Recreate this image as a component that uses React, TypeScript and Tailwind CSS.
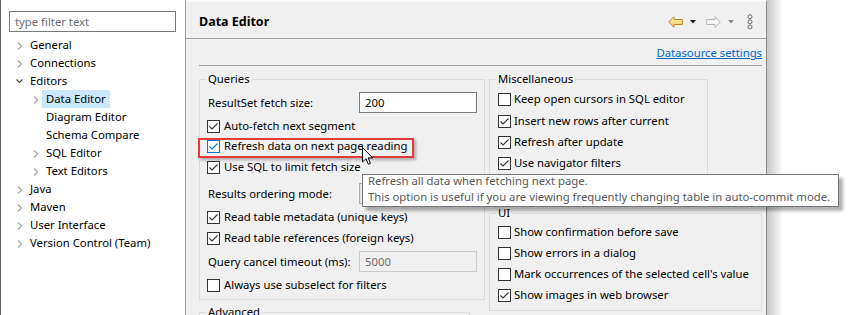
import React from "react";

function Chevron({ open, show = true }: { open?: boolean; show?: boolean }) {
  return (
    <svg width="13" height="18" viewBox="0 0 13 18" className="shrink-0">
      {show &&
        (open ? (
          <polyline points="3.5,7.5 6.5,10.5 9.5,7.5" fill="none" stroke="#4a4a4a" strokeWidth="1.2" />
        ) : (
          <polyline points="5,6.5 8.5,10 5,13.5" fill="none" stroke="#a6a6a6" strokeWidth="1.3" />
        ))}
    </svg>
  );
}

function Check({ checked, focus }: { checked?: boolean; focus?: boolean }) {
  const c = focus ? "#0078d7" : "#333333";
  return (
    <svg width="13" height="13" viewBox="0 0 13 13" className="shrink-0">
      <rect x="0.5" y="0.5" width="12" height="12" fill="#ffffff" stroke={c} />
      {checked && <polyline points="2.5,6.5 5,9 10.5,3.5" fill="none" stroke={c} strokeWidth="1.1" />}
    </svg>
  );
}

type Node = { label: string; level: number; chevron?: "open" | "closed" | "none"; selected?: boolean };

const tree: Node[] = [
  { label: "General", level: 0, chevron: "closed" },
  { label: "Connections", level: 0, chevron: "closed" },
  { label: "Editors", level: 0, chevron: "open" },
  { label: "Data Editor", level: 1, chevron: "closed", selected: true },
  { label: "Diagram Editor", level: 1, chevron: "none" },
  { label: "Schema Compare", level: 1, chevron: "none" },
  { label: "SQL Editor", level: 1, chevron: "closed" },
  { label: "Text Editors", level: 1, chevron: "closed" },
  { label: "Java", level: 0, chevron: "closed" },
  { label: "Maven", level: 0, chevron: "closed" },
  { label: "User Interface", level: 0, chevron: "closed" },
  { label: "Version Control (Team)", level: 0, chevron: "closed" },
];

function CheckRow({ label, checked, focus, mt, right }: { label: string; checked?: boolean; focus?: boolean; mt: string; right?: boolean }) {
  return (
    <div className={`${mt} h-[20px] flex items-center ${right ? "pl-[8px] gap-[3px]" : "pl-[7px] gap-[4px]"}`}>
      <Check checked={checked} focus={focus} />
      <span className="whitespace-nowrap">{label}</span>
    </div>
  );
}

export default function App() {
  return (
    <div className="relative flex w-[862px] h-[315px] overflow-hidden bg-white text-[11.3px] leading-[16px] text-black font-['Noto_Sans',sans-serif]">
      {/* Left tree panel */}
      <div className="w-[186px] h-full shrink-0 bg-white border-l border-l-[#5e5e5e] border-r border-r-[#a0a0a0]">
        <div className="ml-[8px] mt-[11px] w-[167px] h-[21px] border border-[#7a7a7a] flex items-center pl-[5px] text-[#6d6d6d]">
          type filter text
        </div>
        <div className="mt-[4px]">
          {tree.map((n) => (
            <div key={n.label} className={`h-[18px] flex items-center ${n.level === 0 ? "pl-[12px]" : "pl-[28px]"}`}>
              <Chevron open={n.chevron === "open"} show={n.chevron !== "none"} />
              <div className={`h-full flex items-center px-[4px] whitespace-nowrap ${n.selected ? "bg-[#cce8ff]" : ""}`}>{n.label}</div>
            </div>
          ))}
        </div>
      </div>

      {/* Right preference page */}
      <div className="w-[581px] h-full shrink-0 bg-[#f0f0f0] border-r border-r-[#8a8a8a] border-t-[2px] border-t-[#f9f9f9] flex flex-col">
        {/* Header */}
        <div className="h-[37px] shrink-0 border-b border-b-[#a0a0a0] flex items-center pt-[4px] pl-[13px] pr-[13px]">
          <span className="font-bold text-[12.5px]">Data Editor</span>
          <div className="ml-auto flex items-center">
            <svg width="15" height="12" viewBox="0 0 15 12">
              <defs>
                <linearGradient id="bk" x1="0" y1="0" x2="0" y2="1">
                  <stop offset="0" stopColor="#fff6cf" />
                  <stop offset="1" stopColor="#f3c24e" />
                </linearGradient>
              </defs>
              <polygon points="0.7,6 6,0.7 6,3.5 14.3,3.5 14.3,8.5 6,8.5 6,11.3" fill="url(#bk)" stroke="#c3861d" strokeWidth="1" strokeLinejoin="round" />
            </svg>
            <svg width="6" height="4" viewBox="0 0 6 4" className="ml-[7px]">
              <polygon points="0,0 6,0 3,3.5" fill="#1a1a1a" />
            </svg>
            <svg width="15" height="12" viewBox="0 0 15 12" className="ml-[10px]">
              <polygon points="14.3,6 9,0.7 9,3.5 0.7,3.5 0.7,8.5 9,8.5 9,11.3" fill="#f7f7f7" stroke="#b8b8b8" strokeWidth="1" strokeLinejoin="round" />
            </svg>
            <svg width="6" height="4" viewBox="0 0 6 4" className="ml-[7px]">
              <polygon points="0,0 6,0 3,3.5" fill="#8a8a8a" />
            </svg>
            <svg width="6" height="16" viewBox="0 0 6 16" className="ml-[13px]">
              <circle cx="3" cy="2.7" r="2" fill="none" stroke="#6e6e6e" strokeWidth="1" />
              <circle cx="3" cy="7.8" r="2" fill="none" stroke="#6e6e6e" strokeWidth="1" />
              <circle cx="3" cy="12.9" r="2" fill="none" stroke="#6e6e6e" strokeWidth="1" />
            </svg>
          </div>
        </div>

        {/* Link row */}
        <div className="h-[27px] shrink-0 ml-[13px] mr-[4px] border-b border-b-[#a0a0a0] flex items-center justify-end pt-[2px]">
          <span className="text-[#0066cc] underline">Datasource settings</span>
        </div>

        {/* Groups */}
        <div className="flex ml-[13px]">
          <div className="flex flex-col">
            <fieldset className="w-[286px] mt-[5px] border border-[#dcdcdc] pb-[4px]">
              <legend className="ml-[6px] px-[2px] leading-[16px]">Queries</legend>
              <div className="mt-[5px] h-[21px] flex items-center pl-[8px]">
                <span className="w-[151px] whitespace-nowrap">ResultSet fetch size:</span>
                <div className="w-[118px] h-full bg-white border border-[#7a7a7a] flex items-center pl-[5px]">200</div>
              </div>
              <CheckRow mt="mt-[3px]" label="Auto-fetch next segment" checked />
              <CheckRow mt="mt-0" label="Refresh data on next page reading" checked focus />
              <CheckRow mt="mt-[1px]" label="Use SQL to limit fetch size" checked />
              <div className="mt-[6px] h-[21px] flex items-center pl-[8px]">
                <span className="w-[151px] whitespace-nowrap">Results ordering mode:</span>
                <div className="w-[118px] h-full bg-[#e5e5e5] border border-[#adadad]" />
              </div>
              <CheckRow mt="mt-[3px]" label="Read table metadata (unique keys)" checked />
              <CheckRow mt="mt-[1px]" label="Read table references (foreign keys)" checked />
              <div className="mt-[3px] h-[21px] flex items-center pl-[8px]">
                <span className="w-[151px] whitespace-nowrap">Query cancel timeout (ms):</span>
                <div className="w-[118px] h-full bg-[#f0f0f0] border border-[#cccccc] flex items-center pl-[5px] text-[#6d6d6d]">5000</div>
              </div>
              <CheckRow mt="mt-[3px]" label="Always use subselect for filters" />
            </fieldset>
            <fieldset className="w-[271px] mt-[4px] h-[40px] border border-[#dcdcdc]">
              <legend className="ml-[6px] px-[2px] leading-[16px]">Advanced</legend>
            </fieldset>
          </div>

          <div className="flex flex-col ml-[4px]">
            <fieldset className="w-[219px] mt-[5px] border border-[#dcdcdc] pb-[6px]">
              <legend className="ml-[6px] px-[2px] leading-[16px]">Miscellaneous</legend>
              <CheckRow right mt="mt-[2px]" label="Keep open cursors in SQL editor" />
              <CheckRow right mt="mt-[2px]" label="Insert new rows after current" checked />
              <CheckRow right mt="mt-[1px]" label="Refresh after update" checked />
              <CheckRow right mt="mt-[1px]" label="Use navigator filters" checked />
            </fieldset>
            <fieldset className="w-[273px] mt-[25px] border border-[#dcdcdc] pb-[5px]">
              <legend className="ml-[6px] px-[2px] leading-[16px]">UI</legend>
              <CheckRow right mt="mt-[1px]" label="Show confirmation before save" />
              <CheckRow right mt="mt-[1px]" label="Show errors in a dialog" />
              <CheckRow right mt="mt-[1px]" label="Mark occurrences of the selected cell's value" />
              <CheckRow right mt="mt-[1px]" label="Show images in web browser" checked />
            </fieldset>
          </div>
        </div>
      </div>

      {/* Outside dialog shadow */}
      <div className="w-[95px] h-full shrink-0 bg-[linear-gradient(to_right,#c8c8c8,#ffffff_16px)]" />

      {/* Red highlight around focused option */}
      <div className="absolute left-[198px] top-[138px] w-[216px] h-[20px] border-2 border-[#e5393b] shadow-[2px_2px_3px_rgba(0,0,0,0.3)]" />

      {/* Tooltip */}
      <div className="absolute left-[362px] top-[174px] w-[477px] h-[33px] bg-white border border-[#767676] shadow-[4px_4px_3px_rgba(0,0,0,0.3)] pl-[5px] text-[#575757] whitespace-nowrap">
        <div className="-mt-[2px]">
          <div>Refresh all data when fetching next page.</div>
          <div>This option is useful if you are viewing frequently changing table in auto-commit mode.</div>
        </div>
      </div>

      {/* Mouse cursor */}
      <svg width="12" height="19" viewBox="0 0 12 19" className="absolute left-[362px] top-[147px]">
        <polygon points="0.5,0.5 0.5,15 4,11.7 6.3,17.3 8.4,16.4 6.1,10.9 10.7,10.9" fill="#ffffff" stroke="#000000" strokeWidth="1" strokeLinejoin="round" />
      </svg>
    </div>
  );
}
